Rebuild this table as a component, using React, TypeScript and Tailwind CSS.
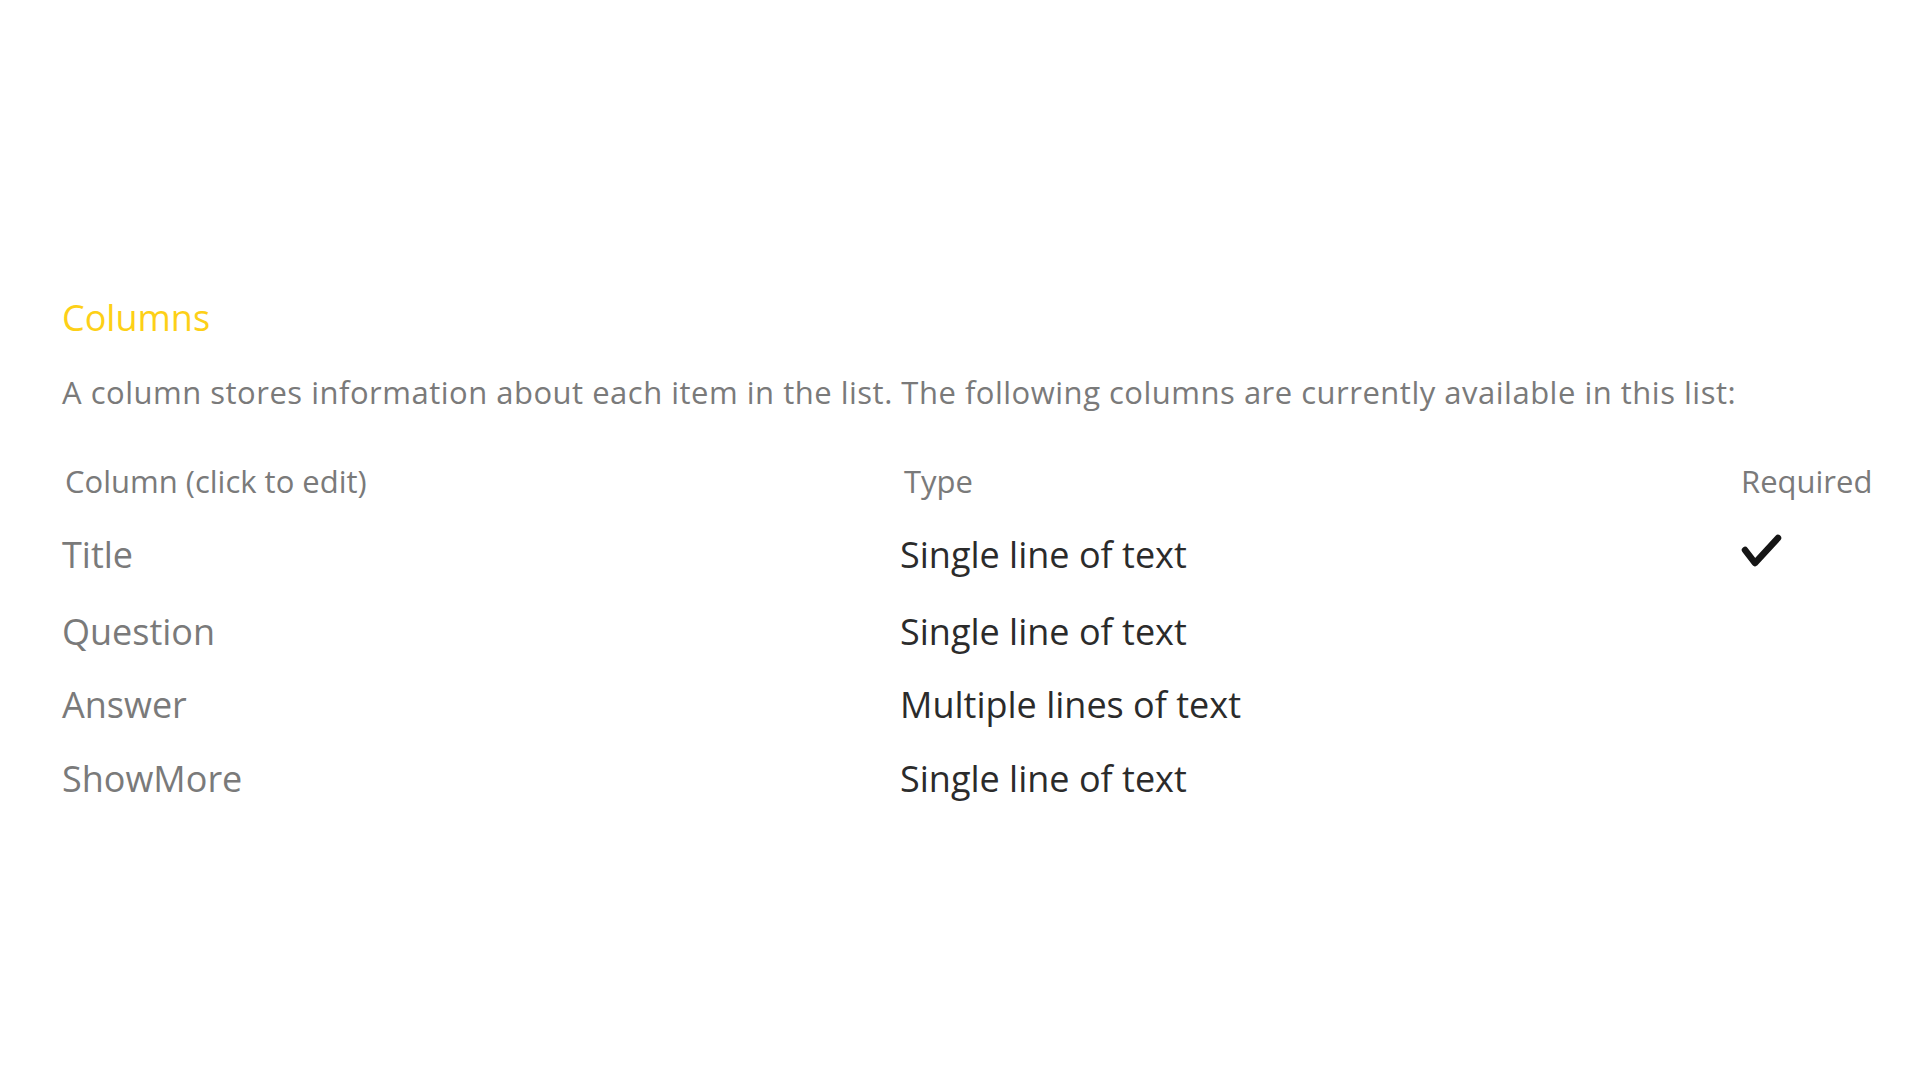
import React from "react";

const rows = [
  { name: "Title", type: "Single line of text", required: true, mt: "mt-[30px]" },
  { name: "Question", type: "Single line of text", required: false, mt: "mt-[29px]" },
  { name: "Answer", type: "Multiple lines of text", required: false, mt: "mt-[25px]" },
  { name: "ShowMore", type: "Single line of text", required: false, mt: "mt-[26px]" },
];

function Check() {
  return (
    <svg width="46" height="48" viewBox="0 0 46 48" className="block">
      <path
        d="M4 19 L14 32 L37 7"
        fill="none"
        stroke="#151515"
        strokeWidth="6.5"
        strokeLinecap="round"
        strokeLinejoin="round"
      />
    </svg>
  );
}

export default function App() {
  return (
    <div
      className="w-[1920px] h-[1080px] bg-white pl-[62px] pt-[294px]"
      style={{ fontFamily: '"Open Sans", "Noto Sans", sans-serif' }}
    >
      <h1 className="text-[36px] leading-[48px] text-[#fdd017] font-normal">
        Columns
      </h1>
      <p className="mt-[30px] text-[31px] leading-[40px] text-[#7a7a7a] tracking-[0.5px]">
        A column stores information about each item in the list. The following columns are currently available in this list:
      </p>
      <div className="mt-[49px] grid grid-cols-[838px_841px_auto]">
        <div className="h-[40px] leading-[40px] text-[31px] text-[#7a7a7a] pl-[3px]">
          Column (click to edit)
        </div>
        <div className="h-[40px] leading-[40px] text-[31px] text-[#7a7a7a] pl-[4px]">
          Type
        </div>
        <div className="h-[40px] leading-[40px] text-[31px] text-[#7a7a7a]">
          Required
        </div>
        {rows.map((r) => (
          <React.Fragment key={r.name}>
            <div className={`${r.mt} h-[48px] leading-[48px] text-[36px] text-[#7a7a7a]`}>
              {r.name}
            </div>
            <div className={`${r.mt} h-[48px] leading-[48px] text-[36px] text-[#2b2b2b]`}>
              {r.type}
            </div>
            <div className={`${r.mt} h-[48px]`}>
              {r.required ? <Check /> : null}
            </div>
          </React.Fragment>
        ))}
      </div>
    </div>
  );
}
